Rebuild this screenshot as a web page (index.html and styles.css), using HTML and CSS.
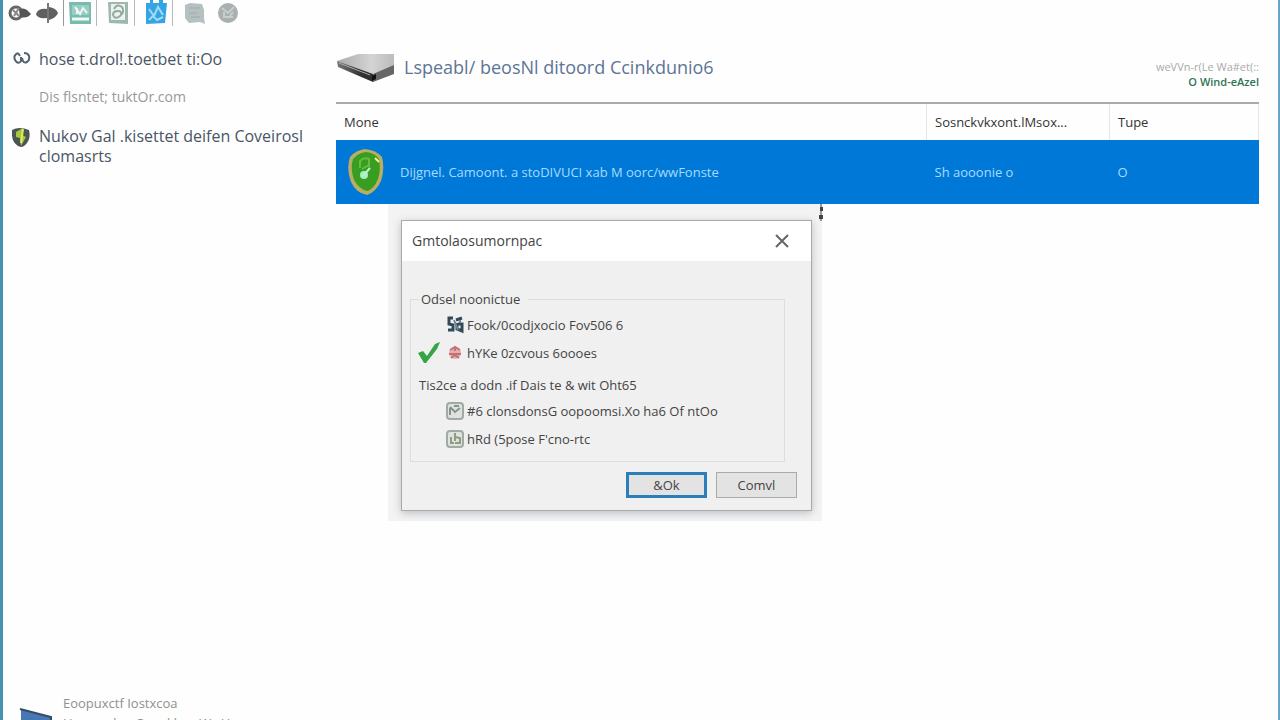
FILE: index.html
```html
<!DOCTYPE html>
<html lang="en">
<head>
    <meta charset="UTF-8">
    <meta name="viewport" content="width=device-width, initial-scale=1.0">
    <title>Control Panel</title>
    <link rel="stylesheet" href="styles.css">
</head>
<body>
    <div class="window">
        <div class="toolbar">
            <button class="tool" aria-label="Back">
                <svg width="24" height="24" viewBox="0 0 24 24"><circle cx="9" cy="12" r="6" fill="none" stroke="#666" stroke-width="3"/><path d="M6 9l6 6M12 7l-5 8" stroke="#888" stroke-width="2"/><path d="M12 9q4-3 8 0l4 4q-4 5-11 3z" fill="#555"/></svg>
            </button>
            <button class="tool" aria-label="Forward">
                <svg width="24" height="24" viewBox="0 0 24 24"><path d="M1 13q2-6 11-5v9q-10 1-11-4z" fill="#606060"/><path d="M13 2v20" stroke="#777" stroke-width="2"/><path d="M14 6q7 1 9 6-2 5-9 7z" fill="#606060"/></svg>
            </button>
            <button class="tool boxed first" aria-label="Console tree">
                <svg width="26" height="26" viewBox="0 0 26 26"><path d="M2 2h22v22H3z" fill="#78bcae"/><path d="M5 5h17v10H5z" fill="#99cfc2"/><path d="M8 7l5 7 3-6 4 5M10 14V8" stroke="#edf8f4" stroke-width="2" fill="none"/><path d="M5 19h17" stroke="#f0faf7" stroke-width="3"/></svg>
            </button>
            <button class="tool boxed" aria-label="Refresh">
                <svg width="26" height="26" viewBox="0 0 26 26"><path d="M3 2h20v22l-19-1z" fill="#9cb9b0"/><path d="M6 4h14v16H6z" fill="#edf2ed"/><path d="M9 9q3-6 8-2 3 5-2 9-5 4-7-1 0-4 5-4 4 0 3 4" fill="none" stroke="#91aaa1" stroke-width="2"/></svg>
            </button>
            <button class="tool boxed" aria-label="Properties">
                <svg width="26" height="26" viewBox="0 0 26 26"><path d="M3 3h4V0h3v3h6V0h4v3h4l-2 20-19 1z" fill="#35a4e4"/><path d="M6 9l5 7 4-9 5 8M6 20l4-4 4 4 6-3" fill="none" stroke="#a0dbf7" stroke-width="2"/></svg>
            </button>
            <button class="tool faded" aria-label="Search">
                <svg width="24" height="24" viewBox="0 0 24 24"><path d="M3 4l5-2 12 1 2 6v8l1 6-5-2-11 1-4-5z" fill="#b5c0c0"/><path d="M7 7h11M7 12h8M9 16h9" stroke="#aab6b6" stroke-width="2"/></svg>
            </button>
            <button class="tool faded" aria-label="Help">
                <svg width="24" height="24" viewBox="0 0 24 24"><circle cx="12" cy="12" r="10" fill="#a9b0b0"/><path d="M6 7l6 5 6-6M7 16h10M8 11v4M17 11l-3 4" stroke="#c7cece" stroke-width="2" fill="none"/></svg>
            </button>
        </div>

        <div class="main">
            <nav class="sidebar">
                <a href="#" class="nav-item">
                    <svg width="20" height="20" viewBox="0 0 20 20"><path d="M7 4Q2 6 4 11q3 5 6 1V8M11 9q1 6 5 4 3-2 2-6-1-3-5-3M7 4l2 3" fill="none" stroke="#536271" stroke-width="2"/></svg>
                    <span>hose t.drol!.toetbet ti:Oo</span>
                </a>
                <a href="#" class="nav-sub">Dis flsntet; tuktOr.com</a>
                <a href="#" class="nav-item">
                    <svg width="20" height="22" viewBox="0 0 20 22"><path d="M1 4q7-4 17 0 2 8-2 13-3 4-6 4-8-2-9-11z" fill="#4c5555"/><path d="M5 6l7-4-1 7 4 2-5 9-1-8-4-1z" fill="#a8c83a"/><path d="M12 3l-2 14" stroke="#e0eb65" stroke-width="2"/></svg>
                    <span>Nukov Gal .kisettet deifen Coveirosl clomasrts</span>
                </a>
            </nav>

            <main class="content">
                <div class="content-header">
                    <svg width="60" height="34" viewBox="0 0 60 34">
                        <defs>
                            <linearGradient id="top" x2="1"><stop stop-color="#aaa"/><stop offset=".6" stop-color="#d4d4d4"/><stop offset="1" stop-color="#bcbcbc"/></linearGradient>
                            <linearGradient id="side" x2="1"><stop stop-color="#777"/><stop offset=".7" stop-color="#303030"/></linearGradient>
                        </defs>
                        <path d="M1 11L22 4h36v14L37 25z" fill="url(#top)"/>
                        <path d="M1 11l36 13v8L2 17z" fill="url(#side)"/>
                        <path d="M37 24l21-9v9l-21 8z" fill="#666"/>
                        <path d="M3 13l31 12" stroke="#aaa"/>
                        <path d="M36 26l4-2v5l-4 2z" fill="#111"/>
                    </svg>
                    <h1>Lspeabl/ beosNl ditoord Ccinkdunio6</h1>
                    <div class="account">
                        <span>weVVn-r(Le Wa#et(::</span>
                        <a href="#">O Wind-eAzel</a>
                    </div>
                </div>

                <table class="list">
                    <thead>
                        <tr><th>Mone</th><th class="col-state">Sosnckvkxont.lMsox...</th><th class="col-type">Tupe</th></tr>
                    </thead>
                    <tbody>
                        <tr>
                            <td>
                                <div class="name-cell">
                                    <svg width="36" height="48" viewBox="0 0 36 48"><path d="M17 1q11 1 17 8 3 12-1 24-5 11-14 14Q8 45 3 34-2 21 2 9 8 2 17 1z" fill="#b9ae62"/><path d="M18 4q9 1 13 7 2 11-1 20-4 10-11 12Q11 41 6 32 2 20 5 11q5-6 13-7z" fill="#389d20"/><path d="M12 20V13q4-4 9-2v8M14 21l7-4" stroke="#63bd42" stroke-width="2" fill="none"/><circle cx="16" cy="27" r="4" fill="#a4f0c1"/><path d="M15 28l7-8" stroke="#b5f3cb" stroke-width="2"/><path d="M27 10l4 4" stroke="#f3f58c" stroke-width="2"/></svg>
                                    <span>Dijgnel. Camoont. a stoDIVUCI xab M oorc/wwFonste</span>
                                </div>
                            </td>
                            <td>Sh aooonie o</td>
                            <td>O</td>
                        </tr>
                    </tbody>
                </table>

                <div class="backdrop">
                    <div class="dialog" role="dialog" aria-labelledby="dialog-title">
                        <div class="dialog-header">
                            <h2 id="dialog-title">Gmtolaosumornpac</h2>
                            <button class="close" aria-label="Close">
                                <svg width="14" height="14" viewBox="0 0 14 14"><path d="M1 1l12 12M13 1L1 13" stroke="#666" stroke-width="2"/></svg>
                            </button>
                        </div>
                        <form class="dialog-body">
                            <fieldset>
                                <legend>Odsel noonictue</legend>
                                <label class="option">
                                    <span class="mark"></span>
                                    <span class="tick">
                                        <input type="radio" name="source">
                                        <svg width="18" height="18" viewBox="0 0 18 18"><path d="M7 2H3v6l4 1v5H2M10 4l6-2M11 7v6l5 2V8h-4" fill="none" stroke="#334957" stroke-width="3"/><path d="M8 4l4 10M14 4v3" stroke="#6d8798" stroke-width="2"/></svg>
                                    </span>
                                    <span>Fook/0codjxocio Fov506 6</span>
                                </label>
                                <label class="option">
                                    <svg class="mark" width="24" height="24" viewBox="0 0 24 24"><path d="M1 12l5-2 4 5L18 3l5-2-3 7L9 22H7z" fill="#35a646"/></svg>
                                    <span class="tick">
                                        <input type="radio" name="source" checked>
                                        <svg width="18" height="18" viewBox="0 0 18 18"><circle cx="9" cy="9" r="6" fill="#dcb1af"/><path d="M4 6l5-3 5 3M3 10h12M5 14l4-3 4 3M9 3v4" fill="none" stroke="#c87071" stroke-width="2"/></svg>
                                    </span>
                                    <span>hYKe 0zcvous 6oooes</span>
                                </label>
                                <p>Tis2ce a dodn .if Dais te &amp; wit Oht65</p>
                                <label class="option">
                                    <span class="mark"></span>
                                    <span class="tick">
                                        <input type="checkbox" class="check">
                                        <svg width="18" height="18" viewBox="0 0 18 18"><path d="M4 5l5 5 5-4M4 13V6M8 4h5" fill="none" stroke="#85938e" stroke-width="2"/></svg>
                                    </span>
                                    <span>#6 clonsdonsG oopoomsi.Xo ha6 Of ntOo</span>
                                </label>
                                <label class="option">
                                    <span class="mark"></span>
                                    <span class="tick">
                                        <input type="checkbox" class="check">
                                        <svg width="18" height="18" viewBox="0 0 18 18"><path d="M9 3v8M5 7v6h3M9 7l5 1v5H9" fill="none" stroke="#929a80" stroke-width="2"/></svg>
                                    </span>
                                    <span>hRd (5pose F'cno-rtc</span>
                                </label>
                            </fieldset>
                            <div class="buttons">
                                <button type="button" class="btn btn-default">&amp;Ok</button>
                                <button type="button" class="btn">Comvl</button>
                            </div>
                        </form>
                    </div>
                </div>
                <svg class="cursor" width="6" height="18" viewBox="0 0 6 18"><path d="M3 0v17" stroke="#999" stroke-width="2"/><path d="M2 5h3M1 13h4" stroke="#444" stroke-width="4"/></svg>
            </main>
        </div>

        <footer class="footer">
            <svg width="34" height="28" viewBox="0 0 34 28"><path d="M2 4l30 8v16H2z" fill="#4777b5"/><path d="M1 4l31 8v16" fill="none" stroke="#344b64" stroke-width="2"/></svg>
            <div>
                <p>Eoopuxctf Iostxcoa</p>
                <p>Ucooocdoo Coookboc Wc.Hocoooooo</p>
            </div>
        </footer>
    </div>
</body>
</html>
```

FILE: styles.css
```css
* {
    margin: 0;
    padding: 0;
    box-sizing: border-box;
}

body {
    font-family: "Open Sans", "Noto Sans", sans-serif;
    font-size: 13px;
    line-height: 20px;
    color: #444;
    background: white;
}

button {
    font: inherit;
    color: inherit;
}

a {
    color: inherit;
    text-decoration: none;
}

.window {
    display: flex;
    flex-direction: column;
    height: 100vh;
    overflow: hidden;
    background: #fefefe;
    border-left: 3px solid #4593b0;
    border-right: 2px solid #6ba3ca;
}

.toolbar {
    display: flex;
    align-items: center;
    height: 25px;
    padding: 0 4px;
    gap: 4px;
}

.tool {
    display: flex;
    align-items: center;
    justify-content: center;
    height: 26px;
    border: none;
    background: none;
}

.boxed {
    width: 34px;
    border-right: 1px solid #b5b9b9;
}

.boxed.first {
    border-left: 1px solid #999;
}

.faded {
    width: 26px;
    margin-left: 4px;
}

.main {
    display: flex;
    flex: 1;
    min-height: 0;
}

.sidebar {
    width: 320px;
    padding: 24px 8px;
    color: #4a5565;
}

.nav-item {
    display: flex;
    align-items: flex-start;
    gap: 8px;
    font-size: 16px;
}

.nav-item svg {
    flex-shrink: 0;
}

.nav-sub {
    display: block;
    margin: 18px 0 19px 28px;
    font-size: 14px;
    color: #999;
}

.content {
    position: relative;
    flex: 1;
    padding: 15px 19px 0 13px;
}

.content-header {
    display: flex;
    align-items: center;
    height: 64px;
    padding-bottom: 8px;
    border-bottom: 2px solid #aaa;
}

.content-header h1 {
    flex: 1;
    margin-left: 8px;
    font-size: 18px;
    font-weight: normal;
    color: #5c7594;
}

.account {
    display: flex;
    flex-direction: column;
    align-items: flex-end;
    padding-top: 14px;
    font-size: 11px;
    line-height: 15px;
    color: #aaa;
}

.account a {
    font-weight: 600;
    color: #2f7555;
}

.list {
    width: 100%;
    border-collapse: collapse;
    table-layout: fixed;
    text-align: left;
    font-weight: 500;
}

.list th {
    height: 36px;
    padding: 0 8px;
    font-weight: 500;
    color: #333;
    border-right: 1px solid #e6e6e6;
}

.list td {
    height: 64px;
    padding: 0 8px;
    color: #a6dcff;
    background: #0078d7;
}

.col-state {
    width: 183px;
}

.col-type {
    width: 149px;
}

.name-cell {
    display: flex;
    align-items: center;
    gap: 16px;
    margin-left: 4px;
}

.backdrop {
    position: absolute;
    top: 179px;
    left: 65px;
    width: 434px;
    padding: 16px 10px 10px 13px;
    background: #f3f3f3;
    font-weight: 500;
}

.dialog {
    background: #f0f0f0;
    border: 1px solid #aaa;
    box-shadow: 0 2px 8px #b9bec4;
}

.dialog-header {
    display: flex;
    align-items: center;
    justify-content: space-between;
    height: 40px;
    padding: 0 20px 0 10px;
    background: white;
}

.dialog-header h2 {
    font-size: 14px;
    font-weight: 500;
}

.close {
    display: flex;
    padding: 2px;
    border: none;
    background: none;
}

.dialog-body {
    padding: 28px 14px 12px 8px;
}

fieldset {
    margin-right: 12px;
    padding: 2px 6px 8px;
    border: 1px solid #ddd;
}

legend {
    margin-left: 2px;
    padding: 0 8px 0 2px;
}

fieldset p {
    margin: 8px 0 2px 2px;
}

.option {
    display: flex;
    align-items: center;
    height: 28px;
    gap: 3px;
    white-space: nowrap;
}

.mark {
    width: 24px;
}

.tick {
    display: grid;
    margin-left: 2px;
}

.tick input,
.tick svg {
    grid-area: 1 / 1;
    width: 18px;
    height: 18px;
}

.tick input {
    appearance: none;
}

.tick .check {
    background: #dfe3df;
    border: 2px solid #a0aaa5;
    border-radius: 4px;
}

.tick svg {
    pointer-events: none;
}

.buttons {
    display: flex;
    justify-content: flex-end;
    gap: 9px;
    margin-top: 10px;
}

.btn {
    width: 81px;
    height: 26px;
    border: 1px solid #aaa;
    background: #e3e3e3;
}

.btn-default {
    border: 3px solid #2b7fb8;
}

.cursor {
    position: absolute;
    top: 179px;
    left: 495px;
}

.footer {
    display: flex;
    height: 27px;
    padding-left: 16px;
    gap: 10px;
    color: #8d928a;
}

.footer svg {
    margin-top: 12px;
}
```
